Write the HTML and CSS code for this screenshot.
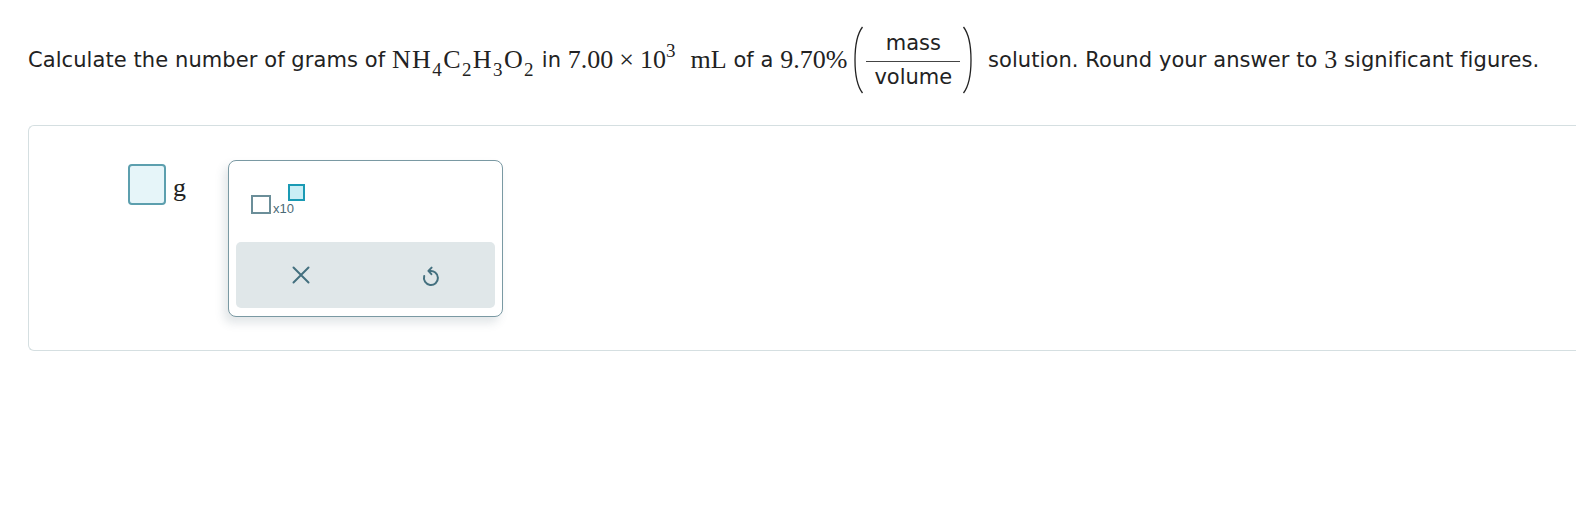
FILE: index.html
```html
<!DOCTYPE html>
<html>
<head>
<meta charset="utf-8">
<link rel="stylesheet" href="styles.css">
</head>
<body>
<div class="page">
  <div class="question">
    <span class="txt">Calculate the number of grams of </span>
    <span class="math chem">NH<sub>4</sub>C<sub>2</sub>H<sub>3</sub>O<sub>2</sub></span>
    <span class="txt"> in </span>
    <span class="math">7.00<span class="op">×</span>10<sup>3</sup><span class="unitsp">mL</span></span>
    <span class="txt"> of a </span>
    <span class="math">9.70%</span>
    <span class="paren-group">
      <svg class="paren" width="14" height="68" viewBox="0 0 14 68"><path d="M12.5 1 C2.5 14 2.5 54 12.5 67" fill="none" stroke="#222" stroke-width="1.3"/></svg>
      <span class="frac">
        <span class="num">mass</span>
        <span class="den">volume</span>
      </span>
      <svg class="paren" width="14" height="68" viewBox="0 0 14 68"><path d="M1.5 1 C11.5 14 11.5 54 1.5 67" fill="none" stroke="#222" stroke-width="1.3"/></svg>
    </span>
    <span class="txt"> solution. Round your answer to </span>
    <span class="math">3</span>
    <span class="txt"> significant figures.</span>
  </div>

  <div class="card">
    <div class="answer">
      <div class="inbox"></div>
      <span class="unit">g</span>
    </div>
    <div class="popup">
      <div class="tools">
        <div class="sci">
          <span class="sbox"></span><span class="x10">x10</span><span class="supbox"></span>
        </div>
      </div>
      <div class="actions">
        <button class="act" aria-label="clear">
          <svg width="20" height="20" viewBox="0 0 20 20"><path d="M2.5 2.5 L17.5 17.5 M17.5 2.5 L2.5 17.5" stroke="#44707f" stroke-width="2" fill="none" stroke-linecap="round"/></svg>
        </button>
        <button class="act" aria-label="undo">
          <svg class="undo" width="24" height="24" viewBox="0 0 24 24"><path d="M6.2 11 A7 7 0 1 0 11.6 6.1" stroke="#44707f" stroke-width="2" fill="none" stroke-linecap="round"/><path d="M13.6 2.6 L10.4 5.9 L13.4 9.2" stroke="#44707f" stroke-width="2" fill="none" stroke-linecap="round" stroke-linejoin="round"/></svg>
        </button>
      </div>
    </div>
  </div>
</div>
</body>
</html>
```

FILE: styles.css
```css
html, body {
  margin: 0;
  padding: 0;
  background: #fff;
}
.page {
  padding: 26px 0 0 28px;
  width: 1600px;
}
.question {
  display: flex;
  align-items: center;
  white-space: pre;
  color: #222;
  height: 68px;
}
.txt {
  font-family: "DejaVu Sans", Verdana, sans-serif;
  font-size: 21px;
  letter-spacing: 0.08px;
}
.math {
  font-family: "Liberation Serif", "Times New Roman", serif;
  font-size: 26px;
  color: #222;
}
.chem {
  letter-spacing: 1.4px;
}
.math sub {
  font-size: 19px;
  vertical-align: -8px;
  line-height: 0;
}
.math sup {
  font-size: 19px;
  vertical-align: 11px;
  line-height: 0;
}
.op {
  margin: 0 6px;
}
.unitsp {
  margin-left: 15px;
}
.paren-group {
  display: flex;
  align-items: center;
  margin-left: 3px;
  margin-right: 5px;
}
.paren {
  display: block;
}
.frac {
  display: flex;
  flex-direction: column;
  align-items: center;
  margin: 0 2px;
  font-family: "DejaVu Sans", Verdana, sans-serif;
  font-size: 21px;
  color: #222;
}
.num {
  padding: 0 0 6px;
  border-bottom: 1.5px solid #444;
  align-self: stretch;
  text-align: center;
  line-height: 24px;
}
.den {
  padding: 3px 8px 0;
  line-height: 24px;
}
.card {
  margin-top: 31px;
  height: 226px;
  border: 1px solid #d5dfe1;
  border-right: none;
  border-radius: 6px 0 0 6px;
  display: flex;
  align-items: flex-start;
  box-sizing: border-box;
  padding: 34px 0 0 99px;
}
.answer {
  display: flex;
  align-items: flex-start;
  margin-top: 4px;
}
.inbox {
  width: 34px;
  height: 37px;
  border: 2px solid #5c9fae;
  border-radius: 4px;
  background: #e6f5f9;
}
.unit {
  font-family: "Liberation Serif", "Times New Roman", serif;
  font-size: 26px;
  line-height: 30px;
  color: #222;
  margin-left: 7px;
  margin-top: 9px;
}
.popup {
  margin-left: 42px;
  width: 275px;
  height: 157px;
  flex-shrink: 0;
  box-sizing: border-box;
  border: 1px solid #7a99a3;
  border-radius: 8px;
  background: #fff;
  box-shadow: -4px 6px 10px rgba(60, 90, 100, 0.15);
  padding: 0 7px 8px 7px;
  display: flex;
  flex-direction: column;
}
.tools {
  height: 81px;
  display: flex;
  align-items: flex-start;
  padding-left: 15px;
}
.sci {
  display: flex;
  align-items: flex-start;
  margin-top: 23px;
}
.sbox {
  width: 16px;
  height: 15px;
  border: 2px solid #6b8e99;
  background: #fff;
  margin-top: 11px;
}
.x10 {
  font-family: "Liberation Sans", Arial, sans-serif;
  font-size: 13px;
  line-height: 14px;
  color: #4a6a76;
  margin-top: 18px;
  margin-left: 2px;
}
.supbox {
  width: 13px;
  height: 13px;
  border: 2px solid #1a9ab4;
  background: #c9eef5;
  margin-left: -6px;
  margin-top: 0;
}
.actions {
  flex: 1;
  background: #e0e7e9;
  border-radius: 5px;
  display: flex;
  align-items: center;
}
.act {
  flex: 1;
  background: none;
  border: none;
  padding: 0;
  height: 100%;
  display: flex;
  align-items: center;
  justify-content: center;
  cursor: pointer;
}
.undo {
  margin-top: 3px;
}
```
